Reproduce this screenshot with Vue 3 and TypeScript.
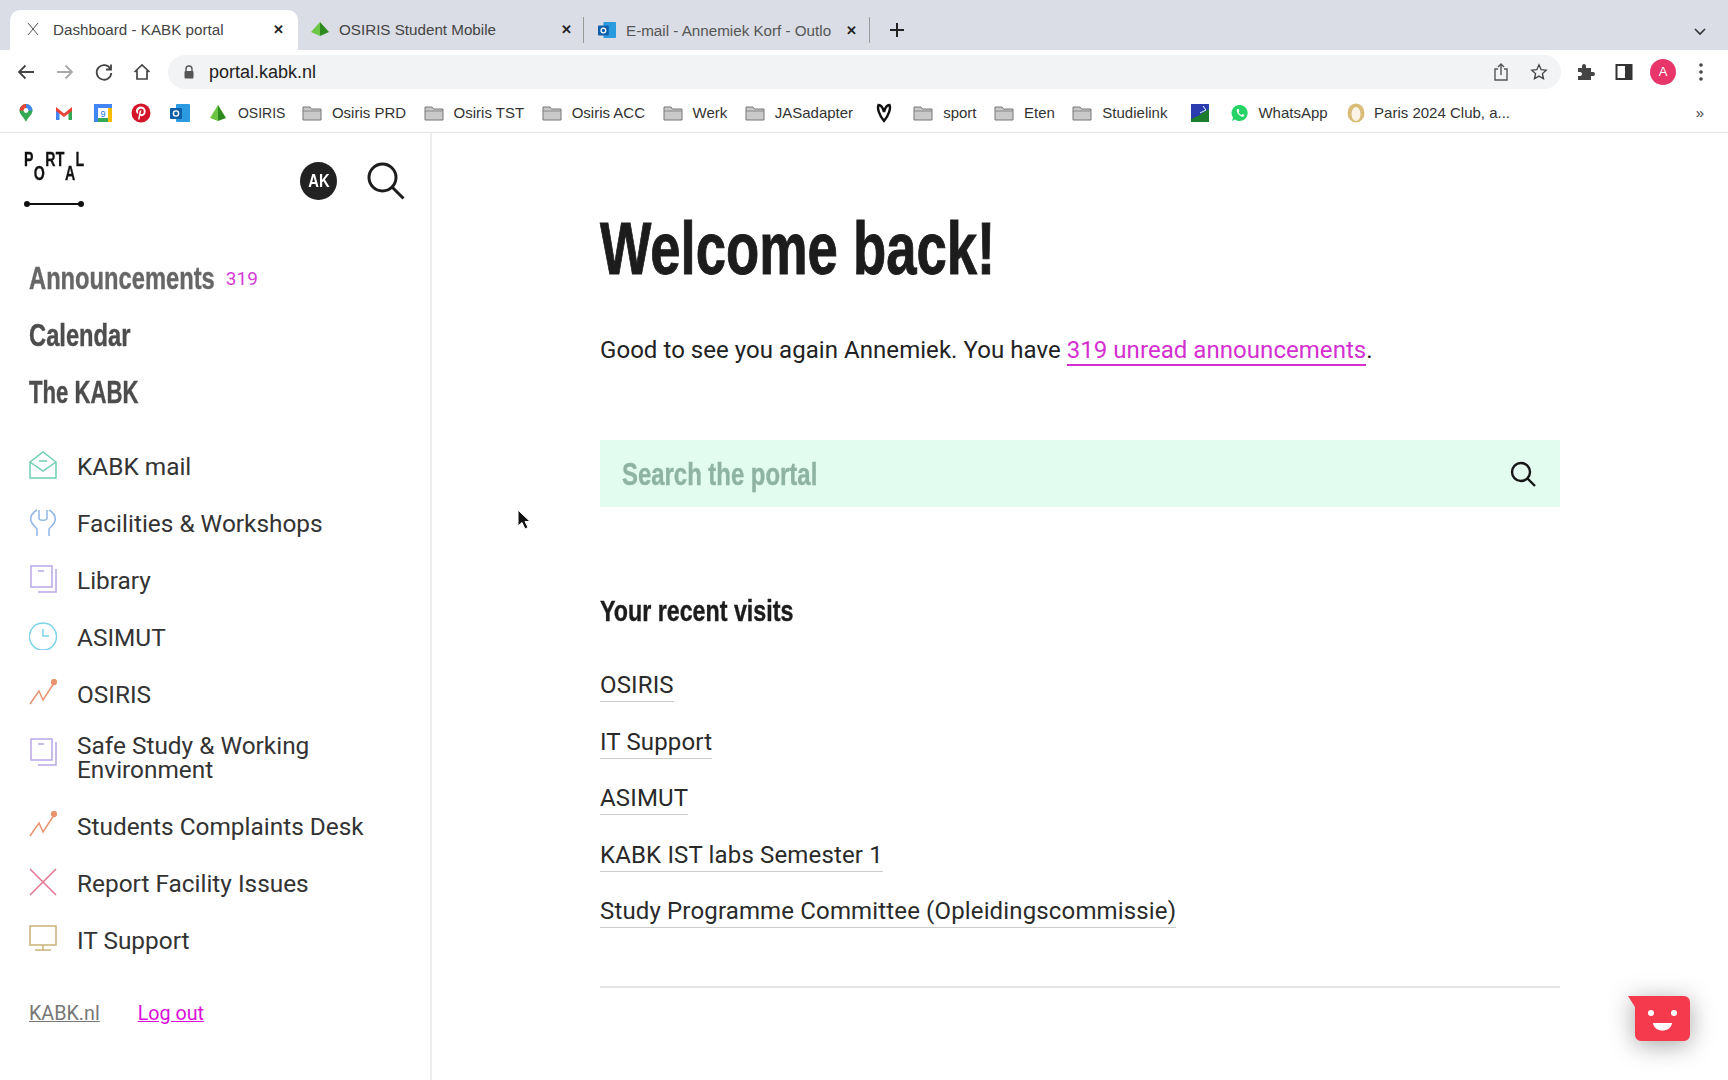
<script setup lang="ts">
interface Mark { kind: string; label?: string }
const marks: Mark[] = [
  { kind: 'maps' }, { kind: 'gmail' }, { kind: 'cal' }, { kind: 'pin' }, { kind: 'outlook' },
  { kind: 'osiris', label: 'OSIRIS' }, { kind: 'folder', label: 'Osiris PRD' }, { kind: 'folder', label: 'Osiris TST' },
  { kind: 'folder', label: 'Osiris ACC' }, { kind: 'folder', label: 'Werk' }, { kind: 'folder', label: 'JASadapter' },
  { kind: 'heart' }, { kind: 'folder', label: 'sport' }, { kind: 'folder', label: 'Eten' }, { kind: 'folder', label: 'Studielink' },
  { kind: 'flag' }, { kind: 'whatsapp', label: 'WhatsApp' }, { kind: 'paris', label: 'Paris 2024 Club, a...' },
]
const mail = { color: '#6fcdb4', d: 'M1 11 14 1 27 11V27H1ZM1 11 14 20 27 11M10 10H18' }
const wrench = { color: '#8fb5e8', d: 'M8 2C3 5 1 9 2 13 3 17 7 19 8 21V28M20 2C25 5 27 9 26 13 25 17 21 19 20 21V28M10 2V10C10 13 18 13 18 10V2' }
const docs = { color: '#b9a8e6', d: 'M2 1H23V22H2ZM9 6H15M27 4V27H9' }
const clock = { color: '#7ed3ea', d: 'M14 1A13.5 13.5 0 1 1 13.9 1ZM14 7V14H20' }
const chart = { color: '#e8936f', d: 'M1 25 10 12 14 21 25 4' }
const cross = { color: '#e2738f', d: 'M1 1 27 27M27 1 1 27' }
const screen = { color: '#c9b377', d: 'M1 1H27V20H1ZM14 20V25M6 25H22' }
const menu = [
  { label: ['KABK mail'], icon: mail }, { label: ['Facilities & Workshops'], icon: wrench }, { label: ['Library'], icon: docs },
  { label: ['ASIMUT'], icon: clock }, { label: ['OSIRIS'], icon: chart, dot: true },
  { label: ['Safe Study & Working', 'Environment'], icon: docs }, { label: ['Students Complaints Desk'], icon: chart, dot: true },
  { label: ['Report Facility Issues'], icon: cross }, { label: ['IT Support'], icon: screen },
]
const recent = ['OSIRIS', 'IT Support', 'ASIMUT', 'KABK IST labs Semester 1', 'Study Programme Committee (Opleidingscommissie)']
</script>

<template>
  <div class="page">
    <header class="chrome">
      <div class="tabs">
        <div class="tab active">
          <svg class="fav" viewBox="0 0 16 16" fill="none" stroke="#555" stroke-width="1"><path d="M3 2 13 14M13 2 3 14" /></svg>
          <span class="tab-t">Dashboard - KABK portal</span><span class="x">✕</span>
        </div>
        <div class="tab">
          <svg class="fav big" viewBox="0 0 20 16"><path d="M10 1 19 11 10 15Z" fill="#2d8a1e" /><path d="M10 1 1 11 10 15Z" fill="#6cc644" /></svg>
          <span class="tab-t">OSIRIS Student Mobile</span><span class="x">✕</span>
        </div>
        <div class="tab sep">
          <svg class="fav big" viewBox="0 0 20 20"><rect x="6" y="1" width="14" height="18" rx="1" fill="#2a9be0" /><rect x="0" y="5" width="12" height="11" rx="1" fill="#0f5fa8" /><circle cx="6" cy="10.5" r="2.6" fill="none" stroke="#fff" stroke-width="1.4" /></svg>
          <span class="tab-t fade">E-mail - Annemiek Korf - Outlo</span><span class="x">✕</span>
        </div>
        <svg class="plus" viewBox="0 0 16 16" stroke="#222" stroke-width="2"><path d="M8 1V15M1 8H15" /></svg>
        <svg class="chev" viewBox="0 0 12 8" fill="none" stroke="#333" stroke-width="1.6"><path d="M1 1 6 6 11 1" /></svg>
      </div>
      <div class="toolbar">
        <svg class="tb" viewBox="0 0 20 20" fill="none" stroke="#444" stroke-width="1.8"><path d="M18 10H3M9.5 3.5 3 10 9.5 16.5" /></svg>
        <svg class="tb" viewBox="0 0 20 20" fill="none" stroke="#aaa" stroke-width="1.8"><path d="M2 10H17M10.5 3.5 17 10 10.5 16.5" /></svg>
        <svg class="tb" viewBox="0 0 20 20" fill="none" stroke="#444" stroke-width="1.8"><path d="M16.5 7A7.3 7.3 0 1 0 17.3 11M17 2.5V7.5H12" /></svg>
        <svg class="tb" viewBox="0 0 20 20" fill="none" stroke="#444" stroke-width="1.7"><path d="M2.5 10 10 3 17.5 10M5 8.5V17H15V8.5" /></svg>
        <div class="omni">
          <svg class="lock" viewBox="0 0 12 14"><path d="M3 6V4A3 3 0 0 1 9 4V6" fill="none" stroke="#555" stroke-width="1.4" /><rect x="1.5" y="6" width="9" height="7.5" rx="1" fill="#555" /></svg>
          <span class="url">portal.kabk.nl</span>
          <svg class="om-i share" viewBox="0 0 16 20" fill="none" stroke="#555" stroke-width="1.4"><path d="M5 7H2V18H14V7H11M8 13V2M5 5 8 2 11 5" /></svg>
          <svg class="om-i star" viewBox="0 0 20 20" fill="none" stroke="#444" stroke-width="1.5"><path d="M10 2 12.4 7.4 18 8 13.8 11.8 15 17.5 10 14.6 5 17.5 6.2 11.8 2 8 7.6 7.4Z" /></svg>
        </div>
        <svg class="tb ext" viewBox="0 0 20 20"><path d="M2 6H6V4A2 2 0 0 1 10 4V6H15V10H17A2 2 0 0 1 17 14H15V18H2V14H4A2 2 0 0 0 4 10H2Z" fill="#444" /></svg>
        <svg class="tb side" viewBox="0 0 18 18"><rect x="1.5" y="2" width="15" height="14" fill="none" stroke="#333" stroke-width="2" /><rect x="10" y="2" width="6" height="14" fill="#333" /></svg>
        <div class="avatar">A</div>
        <svg class="tb dots" viewBox="0 0 6 20" fill="#444"><circle cx="3" cy="3" r="1.8" /><circle cx="3" cy="10" r="1.8" /><circle cx="3" cy="17" r="1.8" /></svg>
      </div>
      <div class="marks">
        <div v-for="(m, i) in marks" :key="i" class="mark" :class="m.kind">
          <svg v-if="m.kind === 'maps'" class="bi" viewBox="0 0 20 20"><path d="M10 1A6.5 6.5 0 0 1 16.5 7.5C16.5 12 12 14 10 19 8 14 3.5 12 3.5 7.5A6.5 6.5 0 0 1 10 1Z" fill="#34a853" /><path d="M10 1A6.5 6.5 0 0 1 16.5 7.5L10 7.5Z" fill="#4285f4" /><path d="M3.5 7.5A6.5 6.5 0 0 1 10 1L10 7.5Z" fill="#ea4335" /><circle cx="10" cy="7.5" r="2.4" fill="#fff" /></svg>
          <svg v-else-if="m.kind === 'gmail'" class="bi" viewBox="0 0 20 20"><path d="M2 4V17H5.5V9Z" fill="#4285f4" /><path d="M18 4V17H14.5V9Z" fill="#34a853" /><path d="M2 4 10 10.5 18 4 18 8 10 14 2 8Z" fill="#ea4335" /></svg>
          <svg v-else-if="m.kind === 'cal'" class="bi" viewBox="0 0 20 20"><rect x="1" y="1" width="18" height="18" fill="#4285f4" /><rect x="5" y="5" width="10" height="10" fill="#fff" /><rect x="15" y="5" width="4" height="14" fill="#fbbc05" /><rect x="5" y="15" width="10" height="4" fill="#34a853" /><text x="10" y="14" font-size="9" text-anchor="middle" fill="#1a73e8" font-family="Liberation Sans">9</text></svg>
          <svg v-else-if="m.kind === 'pin'" class="bi" viewBox="0 0 20 20"><circle cx="10" cy="10" r="9.5" fill="#d3152a" /><path d="M10 3.5C6.5 3.5 5 6 5 8 5 9.5 6 10.5 6.8 11L7.3 9.5C6.5 8 7.5 5.8 10 5.8 12.5 5.8 13.2 8 12.5 10 12 11.3 10 11.5 9.6 10.5L10.5 7.5H8.8L7 16.5H8.5L9.2 12.8C10 13.5 13 13.5 14.3 10.5 15.5 7.5 14 3.5 10 3.5Z" fill="#fff" /></svg>
          <svg v-else-if="m.kind === 'outlook'" class="bi" viewBox="0 0 20 20"><rect x="6" y="1" width="14" height="18" rx="1" fill="#2a9be0" /><rect x="0" y="5" width="12" height="11" rx="1" fill="#0f5fa8" /><circle cx="6" cy="10.5" r="2.6" fill="none" stroke="#fff" stroke-width="1.4" /></svg>
          <svg v-else-if="m.kind === 'osiris'" class="bi" viewBox="0 0 20 20"><path d="M10 2 18 15 10 18Z" fill="#2d8a1e" /><path d="M10 2 2 15 10 18Z" fill="#6cc644" /></svg>
          <svg v-else-if="m.kind === 'folder'" class="bi" viewBox="0 0 20 20"><path d="M1 4H8L9.5 6H19V17H1Z" fill="#c9c9c9" stroke="#777" stroke-width="1" /><path d="M1 8H19" stroke="#888" stroke-width="1" /></svg>
          <svg v-else-if="m.kind === 'heart'" class="bi" viewBox="0 0 20 20" fill="none" stroke="#111" stroke-width="2.4"><path d="M4.5 2C3 5 5 12 10 18 15 12 17 5 15.5 2 13 2 11 5 10 9 9 5 7 2 4.5 2Z" /></svg>
          <svg v-else-if="m.kind === 'flag'" class="bi" viewBox="0 0 20 20"><rect x="1" y="1" width="18" height="18" fill="#1c7d2c" /><path d="M1 1H19V6L8 13 1 16Z" fill="#2a3cb0" /><path d="M13 3 16 7 10 10" fill="none" stroke="#dfe" stroke-width="1" /></svg>
          <svg v-else-if="m.kind === 'whatsapp'" class="bi" viewBox="0 0 20 20"><path d="M10 2A8 8 0 1 1 5 16.5L2 18 3 14.5A8 8 0 0 1 10 2Z" fill="#25d366" /><path d="M7 6C6 8 8 13 13 14L14.5 12 12.5 11 11.5 12C10 11.5 9 10.5 8.5 9L9.5 8 8.5 6Z" fill="#fff" /></svg>
          <svg v-else-if="m.kind === 'paris'" class="bi" viewBox="0 0 20 20"><ellipse cx="10" cy="10" rx="8.5" ry="9.5" fill="#d9bc78" /><ellipse cx="10" cy="11" rx="4.5" ry="7" fill="#fbf4e6" /></svg>
          <span v-if="m.label" class="mark-t">{{ m.label }}</span>
        </div>
        <span class="more">»</span>
      </div>
    </header>

    <div class="body">
      <aside class="sidebar">
        <div class="side-head">
          <div class="logo">
            <div class="logo-w"><span>P</span><span class="lo">O</span><span>RT</span><span class="lo">A</span><span>L</span></div>
            <svg class="logo-l" viewBox="0 0 60 6"><path d="M3 3H57" stroke="#111" stroke-width="2" /><circle cx="3" cy="3" r="3" fill="#111" /><circle cx="57" cy="3" r="3" fill="#111" /></svg>
          </div>
          <div class="ak"><span>AK</span></div>
          <svg class="mag" viewBox="0 0 38 38" fill="none" stroke="#1d1d1d" stroke-width="3"><circle cx="15.5" cy="15.5" r="13.5" /><path d="M25 25 36.5 36.5" /></svg>
        </div>
        <nav class="big-nav">
          <div class="big first"><span class="cond">Announcements</span><span class="count">319</span></div>
          <div class="big"><span class="cond">Calendar</span></div>
          <div class="big"><span class="cond kabk-h">The KABK</span></div>
        </nav>
        <ul class="menu">
          <li v-for="item in menu" :key="item.label[0]" :class="{ tall: item.label.length > 1 }">
            <svg class="mi" viewBox="0 0 28 28" fill="none" :stroke="item.icon.color" stroke-width="1.5">
              <path :d="item.icon.d" />
              <circle v-if="item.dot" cx="25" cy="3" r="2.4" :fill="item.icon.color" />
            </svg>
            <span class="ml"><span v-for="l in item.label" :key="l" class="line">{{ l }}</span></span>
          </li>
        </ul>
        <div class="foot"><a class="kabk">KABK.nl</a><a class="out">Log out</a></div>
      </aside>

      <main class="main">
        <h1><span>Welcome back!</span></h1>
        <p class="intro">Good to see you again Annemiek. You have <a>319 unread announcements</a>.</p>
        <div class="search">
          <span class="st">Search the portal</span>
          <svg viewBox="0 0 26 26" fill="none" stroke="#161616" stroke-width="2.4"><circle cx="11" cy="11" r="9" /><path d="M17.5 17.5 25 25" /></svg>
        </div>
        <h2><span>Your recent visits</span></h2>
        <div class="links"><div v-for="r in recent" :key="r" class="link-row"><a>{{ r }}</a></div></div>
        <hr />
      </main>
    </div>

    <svg class="cursor" viewBox="0 0 14 22"><path d="M1 1V17L5 13.5 8 20 11 18.5 8 12.5H13Z" fill="#111" stroke="#fff" stroke-width="1" /></svg>
    <svg class="chat" viewBox="0 0 64 48">
      <path d="M1 1H57A6 6 0 0 1 63 7V40A6 6 0 0 1 57 46H14A6 6 0 0 1 8 40V12Z" fill="#f63a4d" />
      <circle cx="24" cy="18" r="3" fill="#fff" /><circle cx="47" cy="18" r="3" fill="#fff" />
      <path d="M26 28H45C44 38 27 38 26 28Z" fill="#fff" />
    </svg>
  </div>
</template>

<style scoped>
.page { position: relative; width: 1728px; height: 1080px; overflow: hidden; background: #fff; display: flex; flex-direction: column; font-family: Roboto, "Liberation Sans", sans-serif; color: #222; }
.chrome { height: 133px; flex: none; border-bottom: 1px solid #e2e2e2; box-sizing: border-box; font-family: "Liberation Sans", sans-serif; }
.tabs { height: 50px; background: #dadde5; display: flex; align-items: flex-end; padding-left: 10px; box-sizing: border-box; }
.tab { width: 287px; height: 40px; display: flex; align-items: center; box-sizing: border-box; padding: 0 14px 2px 23px; font-size: 15.2px; color: #444; position: relative; }
.tab.active { width: 288px; background: #fff; border-radius: 10px 10px 0 0; padding-left: 15px; }
.tab.sep { border-left: 1px solid #999; border-right: 1px solid #999; height: 26px; margin-bottom: 7px; padding: 0 12px 0 13px; }
.tab:nth-child(2) { padding-left: 12px; width: 285px; padding-right: 11px; }
.fav { width: 16px; height: 16px; margin-right: 12px; flex: none; }
.fav.big { width: 20px; height: 18px; margin-right: 9px; }
.tab-t { flex: 1; white-space: nowrap; overflow: hidden; }
.tab-t.fade { color: #555; }
.x { font-size: 13px; color: #222; font-weight: 700; }
.plus { width: 16px; height: 16px; margin: 0 0 12px 19px; flex: none; }
.chev { width: 12px; height: 8px; margin: 0 22px 14px auto; flex: none; }
.toolbar { height: 43px; display: flex; align-items: center; padding-left: 16px; box-sizing: border-box; }
.tb { width: 20px; height: 20px; flex: none; margin-right: 19px; }
.tb:nth-child(3) { margin-right: 18px; }
.tb:nth-child(4) { margin-right: 16px; }
.omni { width: 1393px; height: 34px; border-radius: 17px; background: #f1f3f4; display: flex; align-items: center; padding: 0 13px 0 15px; box-sizing: border-box; margin-right: 15px; }
.lock { width: 12px; height: 14px; margin-right: 14px; }
.url { font-size: 18px; color: #222; flex: 1; padding-top: 1px; }
.om-i { height: 20px; width: 18px; }
.share { margin-right: 20px; }
.ext { margin-right: 19px; }
.side { margin-right: 17px; width: 18px; height: 18px; }
.avatar { width: 26px; height: 26px; border-radius: 50%; background: #e8366a; color: #fff; font-size: 13px; display: flex; align-items: center; justify-content: center; margin-right: 22px; }
.dots { width: 6px; height: 20px; margin: 0; }
.marks { height: 39px; display: flex; align-items: center; padding-left: 16px; gap: 17.5px; box-sizing: border-box; }
.mark { display: flex; align-items: center; gap: 10px; }
.mark.gmail, .mark.cal, .mark.pin, .mark.outlook, .mark.osiris { margin-left: .9px; }
.mark.osiris { margin-right: -1px; }
.mark.osiris .mark-t { font-size: 14px; }
.mark.heart { margin: 0 2px 0 3px; }
.mark.flag { margin: 0 3px 0 5px; }
.mark.whatsapp, .mark.paris { gap: 8px; }
.mark.paris { margin-left: 1px; }
.bi { width: 20px; height: 20px; flex: none; }
.mark-t { font-size: 15px; color: #333; white-space: nowrap; }
.more { margin-left: auto; margin-right: 24px; font-size: 15px; color: #444; }
.body { flex: 1; display: flex; min-height: 0; }
.sidebar { width: 432px; flex: none; box-sizing: border-box; border-right: 2px solid #eeeeee; }
.side-head { height: 117px; display: flex; align-items: flex-start; padding: 18px 25px 0 24px; box-sizing: border-box; }
.logo { width: 60px; margin-right: 216px; }
.logo-w { display: flex; width: 84px; transform: scaleX(.71); transform-origin: left; font-family: "Liberation Sans", sans-serif; font-weight: 700; font-size: 20px; line-height: 16px; height: 30px; color: #111; letter-spacing: .5px; -webkit-text-stroke: .3px currentColor; }
.logo-w .lo { transform: translateY(14px); }
.logo-l { width: 60px; height: 6px; display: block; margin-top: 20px; }
.ak { width: 38px; height: 38px; border-radius: 50%; background: #222; color: #fff; font-size: 18px; font-weight: 700; display: flex; align-items: center; justify-content: center; margin: 11px 30px 0 0; font-family: "Liberation Sans", sans-serif; }
.ak span { transform: scaleX(.82); }
.mag { width: 38px; height: 38px; margin-top: 11px; flex: none; }
.big-nav { padding-left: 29px; margin-bottom: 17px; }
.big { height: 57px; display: flex; align-items: center; font-family: "Liberation Sans", sans-serif; font-weight: 700; font-size: 31px; color: #4d4d4d; white-space: nowrap; }
.cond { display: inline-block; transform: scaleX(.765); transform-origin: left; -webkit-text-stroke: .4px currentColor; }
.cond.kabk-h { transform: scaleX(.715); }
.big.first { color: #666; }
.count { font-family: Roboto, sans-serif; font-weight: 400; font-size: 19px; color: #d53cd5; margin-left: -46px; }
.menu { list-style: none; margin: 0; padding: 0 0 0 29px; }
.menu li { min-height: 57px; display: flex; box-sizing: border-box; padding-top: 13px; }
.menu li.tall { min-height: 75px; padding-top: 15px; }
.mi { width: 28px; height: 28px; flex: none; margin-right: 20px; }
.ml { font-size: 24.4px; line-height: 24px; color: #333; display: block; padding-top: 4px; }
.tall .ml { padding-top: 0; margin-top: -4px; }
.line { display: block; }
.foot { padding: 33px 0 0 29px; font-size: 19.7px; display: flex; gap: 38px; }
.kabk { color: #777; text-decoration: underline; }
.out { color: #d90fd9; text-decoration: underline; }
.main { flex: 1; padding: 76px 0 0 168px; box-sizing: border-box; }
.main > * { width: 960px; }
h1 { margin: 0; font-family: "Liberation Sans", sans-serif; font-weight: 700; font-size: 74px; line-height: 80px; color: #1c1c1c; white-space: nowrap; }
h1 span { display: inline-block; transform: scaleX(.735); transform-origin: left; -webkit-text-stroke: 1px currentColor; }
.intro { margin: 43px 0 0; font-size: 24px; line-height: 36px; color: #222; letter-spacing: .05px; }
.intro a { color: #d42fd0; border-bottom: 2px solid #d42fd0; }
.search { height: 67px; margin-top: 72px; background: #e2fcf0; display: flex; align-items: center; justify-content: space-between; padding: 2px 24px 0 22px; box-sizing: border-box; font-family: "Liberation Sans", sans-serif; font-weight: 700; font-size: 32px; color: #8fb3a3; }
.st { display: inline-block; transform: scaleX(.747); transform-origin: left; -webkit-text-stroke: .4px currentColor; }
.search svg { width: 26px; height: 26px; margin-top: -2px; }
h2 { margin: 85px 0 0; font-family: "Liberation Sans", sans-serif; font-weight: 700; font-size: 30px; line-height: 38px; color: #1c1c1c; }
h2 span { display: inline-block; transform: scaleX(.775); transform-origin: left; -webkit-text-stroke: .4px currentColor; }
.links { margin-top: 39px; }
.link-row { height: 56.5px; font-size: 24px; line-height: 32px; letter-spacing: .15px; }
.link-row a { border-bottom: 1px solid #ccc; color: #2a2a2a; padding-bottom: 2px; }
hr { margin: 34px 0 0; border: 0; border-top: 2px solid #e4e4e4; }
.cursor { position: absolute; left: 517px; top: 509px; width: 14px; height: 22px; }
.chat { position: absolute; left: 1627px; top: 995px; width: 64px; height: 48px; filter: drop-shadow(0 4px 12px rgba(0,0,0,.35)); }
</style>
